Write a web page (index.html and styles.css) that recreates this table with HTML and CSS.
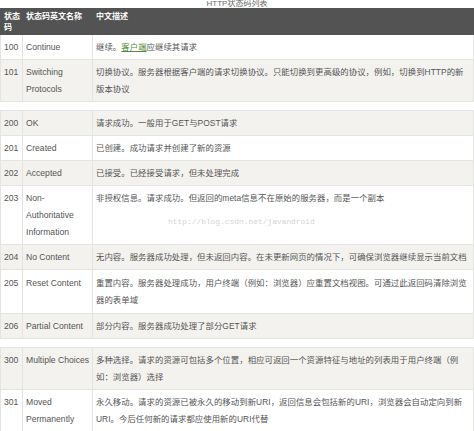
FILE: index.html
```html
<!DOCTYPE html>
<html lang="zh-CN">
<head>
<meta charset="utf-8">
<title>HTTP状态码列表</title>
<link rel="stylesheet" href="styles.css">
</head>
<body>
<div class="wrap">
  <div class="caption">HTTP状态码列表</div>
  <table class="codes">
    <colgroup><col class="c1"><col class="c2"><col class="c3"></colgroup>
    <thead>
      <tr><th>状态<br>码</th><th>状态码英文名称</th><th>中文描述</th></tr>
    </thead>
    <tbody>
      <tr><td>100</td><td>Continue</td><td class="zh">继续。<a class="lnk">客户端</a>应继续其请求</td></tr>
      <tr class="alt"><td>101</td><td>Switching<br>Protocols</td><td class="zh">切换协议。服务器根据客户端的请求切换协议。只能切换到更高级的协议，例如，切换到HTTP的新<br>版本协议</td></tr>
      <tr class="gap"><td colspan="3"></td></tr>
      <tr class="alt"><td>200</td><td>OK</td><td class="zh">请求成功。一般用于GET与POST请求</td></tr>
      <tr><td>201</td><td>Created</td><td class="zh">已创建。成功请求并创建了新的资源</td></tr>
      <tr class="alt"><td>202</td><td>Accepted</td><td class="zh">已接受。已经接受请求，但未处理完成</td></tr>
      <tr><td>203</td><td>Non-<br>Authoritative<br>Information</td><td class="zh">非授权信息。请求成功。但返回的meta信息不在原始的服务器，而是一个副本</td></tr>
      <tr class="alt"><td>204</td><td>No Content</td><td class="zh">无内容。服务器成功处理，但未返回内容。在未更新网页的情况下，可确保浏览器继续显示当前文档</td></tr>
      <tr class="tall"><td>205</td><td>Reset Content</td><td class="zh">重置内容。服务器处理成功，用户终端（例如：浏览器）应重置文档视图。可通过此返回码清除浏览<br>器的表单域</td></tr>
      <tr class="alt"><td>206</td><td>Partial Content</td><td class="zh">部分内容。服务器成功处理了部分GET请求</td></tr>
      <tr class="gap"><td colspan="3"></td></tr>
      <tr class="alt"><td>300</td><td>Multiple Choices</td><td class="zh">多种选择。请求的资源可包括多个位置，相应可返回一个资源特征与地址的列表用于用户终端（例<br>如：浏览器）选择</td></tr>
      <tr><td>301</td><td>Moved<br>Permanently</td><td class="zh">永久移动。请求的资源已被永久的移动到新URI，返回信息会包括新的URI，浏览器会自动定向到新<br>URI。今后任何新的请求都应使用新的URI代替</td></tr>
    </tbody>
  </table>
  <div class="watermark">http://blog.csdn.net/javandroid</div>
</div>
</body>
</html>
```

FILE: styles.css
```css
html, body {
  margin: 0;
  padding: 0;
  background: #ffffff;
}
.wrap {
  position: relative;
  width: 474px;
  overflow: hidden;
  font-family: "Liberation Sans", "Noto Sans CJK SC", sans-serif;
}
.caption {
  height: 8px;
  line-height: 7px;
  font-size: 8px;
  color: #6a6a6a;
  text-align: center;
  overflow: hidden;
}
.codes {
  width: 474px;
  border-collapse: collapse;
  table-layout: fixed;
  font-size: 8.6px;
  color: #555555;
}
.c1 { width: 22px; }
.c2 { width: 70px; }
.codes th {
  background: #535353;
  color: #ffffff;
  font-weight: bold;
  text-align: left;
  vertical-align: top;
  padding: 2px 1px 1px 3px;
  line-height: 11px;
  font-size: 8px;
  white-space: nowrap;
  border: 1px solid #535353;
}
.codes td {
  padding: 4px 3px 3px;
  line-height: 17px;
  vertical-align: top;
  border: 1px solid #e4e4e2;
  white-space: nowrap;
}
.codes tr.tall td {
  padding-top: 5px;
  padding-bottom: 4px;
}
.codes td.zh {
  font-size: 8.4px;
  letter-spacing: 0.05px;
}
.codes tr.alt td {
  background: #f3f2ef;
}
.codes tr.gap td {
  height: 8px;
  padding: 0;
  line-height: 0;
  background: #ffffff;
  border-left: none;
  border-right: none;
}
.lnk {
  color: #4f8a34;
  text-decoration: underline;
}
.watermark {
  position: absolute;
  left: 168px;
  top: 217px;
  font-family: "Liberation Mono", "DejaVu Sans Mono", monospace;
  font-size: 7.9px;
  line-height: 10px;
  color: #d4d4d4;
}
```
